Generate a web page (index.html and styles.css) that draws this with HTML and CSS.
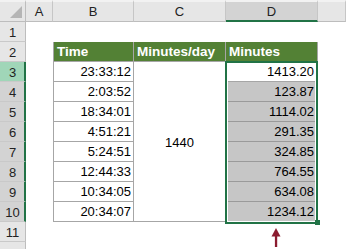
FILE: index.html
```html
<!DOCTYPE html>
<html>
<head>
<meta charset="utf-8">
<link rel="stylesheet" href="styles.css">
</head>
<body>
<div class="sheet">
  <div class="ch corner"><svg class="tri" width="12" height="12" viewBox="0 0 12 12"><polygon points="12,0 12,12 0,12" fill="#b5b5b5"/></svg></div>
  <div class="ch">A</div>
  <div class="ch">B</div>
  <div class="ch">C</div>
  <div class="ch ch-sel">D</div>
  <div class="ch"></div>

  <div class="rh">1</div><div class="c"></div><div class="c"></div><div class="c"></div><div class="c"></div><div class="c"></div>

  <div class="rh">2</div><div class="c"></div>
  <div class="c th first">Time</div>
  <div class="c th">Minutes/day</div>
  <div class="c th">Minutes</div>
  <div class="c"></div>

  <div class="rh rh-sel rh-act">3</div><div class="c"></div>
  <div class="c td first num">23:33:12</div>
  <div class="c td merged">1440</div>
  <div class="c td num dv">1413.20</div>
  <div class="c"></div>

  <div class="rh rh-sel">4</div><div class="c"></div>
  <div class="c td first num">2:03:52</div>
  <div class="c td num dv hl">123.87</div>
  <div class="c"></div>

  <div class="rh rh-sel">5</div><div class="c"></div>
  <div class="c td first num">18:34:01</div>
  <div class="c td num dv hl">1114.02</div>
  <div class="c"></div>

  <div class="rh rh-sel">6</div><div class="c"></div>
  <div class="c td first num">4:51:21</div>
  <div class="c td num dv hl">291.35</div>
  <div class="c"></div>

  <div class="rh rh-sel">7</div><div class="c"></div>
  <div class="c td first num">5:24:51</div>
  <div class="c td num dv hl">324.85</div>
  <div class="c"></div>

  <div class="rh rh-sel">8</div><div class="c"></div>
  <div class="c td first num">12:44:33</div>
  <div class="c td num dv hl">764.55</div>
  <div class="c"></div>

  <div class="rh rh-sel">9</div><div class="c"></div>
  <div class="c td first num">10:34:05</div>
  <div class="c td num dv hl">634.08</div>
  <div class="c"></div>

  <div class="rh rh-sel">10</div><div class="c"></div>
  <div class="c td first num">20:34:07</div>
  <div class="c td num dv hl">1234.12</div>
  <div class="c"></div>

  <div class="rh">11</div><div class="c"></div><div class="c"></div><div class="c"></div>
  <div class="c arrow-cell"><svg class="arrow" width="10" height="19" viewBox="0 0 10 19"><polygon points="5,0 9.5,8.5 0.5,8.5" fill="#8b1b2f"/><rect x="3.9" y="8" width="2.3" height="11" fill="#8b1b2f"/></svg></div>
  <div class="c"></div>

  <div class="rh"></div><div class="c"></div><div class="c"></div><div class="c"></div><div class="c"></div><div class="c"></div>

  <div class="sel"><div class="handle"></div></div>
</div>
</body>
</html>
```

FILE: styles.css
```css
* { box-sizing: border-box; }
html, body { margin: 0; padding: 0; background: #fff; }
body {
  font-family: "Liberation Sans", Arial, sans-serif;
  font-size: 13px;
  color: #000;
}
.sheet {
  position: relative;
  display: grid;
  grid-template-columns: 26px 27px 81px 92px 92px 28px;
  grid-template-rows: 22px repeat(12, 20px);
  width: 346px;
  height: 249px;
  overflow: hidden;
}
.ch {
  background: #e6e6e6;
  border-top: 2px solid #f2f2f2;
  border-right: 1px solid #c6c6c6;
  border-bottom: 1px solid #bdbdbd;
  text-align: center;
  line-height: 18px;
  padding-top: 1px;
  color: #222;
}
.ch-sel {
  background: #d3d3d3;
  border-bottom: 2px solid #217346;
}
.corner {
  position: relative;
  display: flex;
  justify-content: flex-end;
  align-items: flex-end;
  padding: 0 3px 3px 0;
  border-right-color: #bdbdbd;
}
.tri { display: block; }
.rh {
  background: #e6e6e6;
  border-right: 1px solid #bdbdbd;
  border-bottom: 1px solid #c9c9c9;
  text-align: center;
  line-height: 16px;
  padding-top: 3px;
  color: #222;
}
.rh-sel {
  background: #d3d3d3;
  border-right: 2px solid #217346;
  padding-left: 1px;
}
.rh-act { background: #a0d6b8; }
.c { background: #fff; }
.th {
  background: #538135;
  color: #fff;
  font-weight: bold;
  font-size: 13.5px;
  line-height: 18px;
  padding: 1px 0 0 3px;
  border-right: 1px solid #a6a6a6;
  border-bottom: 1px solid #a6a6a6;
  white-space: nowrap;
}
.td {
  line-height: 18px;
  padding-top: 1px;
  border-right: 1px solid #a6a6a6;
  border-bottom: 1px solid #a6a6a6;
  white-space: nowrap;
}
.first { border-left: 1px solid #a6a6a6; }
.num { text-align: right; padding-right: 2px; }
.dv { padding-right: 3px; }
.hl { background: #c6c6c6; border-bottom-color: #9a9a9a; }
.merged {
  grid-row: span 8;
  display: flex;
  align-items: center;
  justify-content: center;
  padding-top: 2px;
}
.arrow-cell {
  position: relative;
  z-index: 1;
  overflow: visible;
  background: transparent;
  padding: 6px 0 0 45px;
}
.arrow { display: block; overflow: visible; }
.sel {
  position: absolute;
  z-index: 2;
  grid-column: 5 / 6;
  grid-row: 4 / 12;
  top: -1px;
  left: -1px;
  right: 0;
  bottom: -2px;
  border: 2px solid #217346;
  box-shadow: inset 0 0 0 1px #fff;
}
.handle {
  position: absolute;
  right: -4px;
  bottom: -3px;
  width: 5px;
  height: 5px;
  background: #217346;
}
```
